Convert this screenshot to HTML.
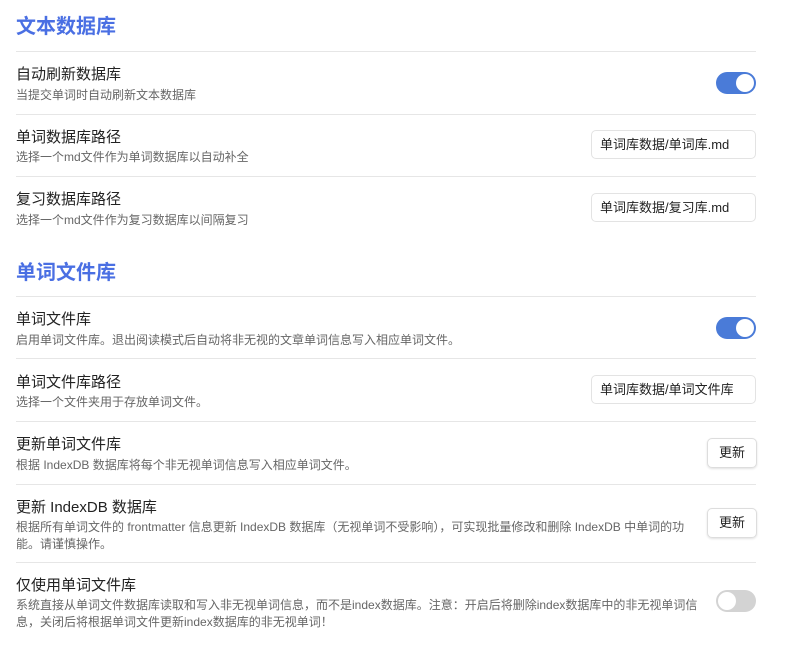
<!DOCTYPE html>
<html><head><meta charset="utf-8"><style>
body{margin:0;width:802px;height:650px;background:#fff;font-family:"Liberation Sans","Noto Sans CJK SC",sans-serif;position:relative;overflow:hidden}
.a{position:absolute}
h2{position:absolute;margin:0;left:16px;font-size:20px;font-weight:bold;color:#4a6fe3}
.hr{position:absolute;left:16px;width:740px;height:1px;background:#e6e6e6}
.n{position:absolute;left:16px;font-size:15px;color:#222}
.d{position:absolute;left:16px;font-size:12px;color:#666;line-height:17px;width:690px}
.t{position:absolute;left:716px;width:40px;height:22px;border-radius:11px;background:#4a7bd8}
.t::after{content:"";position:absolute;top:2px;right:2px;width:18px;height:18px;border-radius:50%;background:#fff}
.t.off{background:#d3d3d3}
.t.off::after{right:auto;left:2px}
.in{position:absolute;left:591px;width:163px;height:28px;border:1px solid #e3e3e3;border-radius:5px;font-size:13px;color:#222;line-height:28px;padding-left:8px;box-sizing:border-box;width:165px;height:29px}
.b{position:absolute;left:707px;width:48px;height:28px;border:1px solid #ddd;border-radius:5px;box-shadow:0 1px 2px rgba(0,0,0,.12);font-size:13px;color:#222;text-align:center;line-height:28px}
</style></head><body>
<h2 style="top:10px">文本数据库</h2>
<div class="hr" style="top:51px"></div>
<div class="n" style="top:63px">自动刷新数据库</div>
<div class="d" style="top:87px">当提交单词时自动刷新文本数据库</div>
<div class="t" style="top:72px"></div>
<div class="hr" style="top:114px"></div>
<div class="n" style="top:126px">单词数据库路径</div>
<div class="d" style="top:149px">选择一个md文件作为单词数据库以自动补全</div>
<div class="in" style="top:130px">单词库数据/单词库.md</div>
<div class="hr" style="top:176px"></div>
<div class="n" style="top:188px">复习数据库路径</div>
<div class="d" style="top:212px">选择一个md文件作为复习数据库以间隔复习</div>
<div class="in" style="top:193px">单词库数据/复习库.md</div>
<h2 style="top:256px">单词文件库</h2>
<div class="hr" style="top:296px"></div>
<div class="n" style="top:308px">单词文件库</div>
<div class="d" style="top:332px">启用单词文件库。退出阅读模式后自动将非无视的文章单词信息写入相应单词文件。</div>
<div class="t" style="top:317px"></div>
<div class="hr" style="top:358px"></div>
<div class="n" style="top:371px">单词文件库路径</div>
<div class="d" style="top:394px">选择一个文件夹用于存放单词文件。</div>
<div class="in" style="top:375px">单词库数据/单词文件库</div>
<div class="hr" style="top:421px"></div>
<div class="n" style="top:433px">更新单词文件库</div>
<div class="d" style="top:457px">根据 IndexDB 数据库将每个非无视单词信息写入相应单词文件。</div>
<div class="b" style="top:438px">更新</div>
<div class="hr" style="top:484px"></div>
<div class="n" style="top:496px">更新 IndexDB 数据库</div>
<div class="d" style="top:519px">根据所有单词文件的 frontmatter 信息更新 IndexDB 数据库（无视单词不受影响），可实现批量修改和删除 IndexDB 中单词的功能。请谨慎操作。</div>
<div class="b" style="top:508px">更新</div>
<div class="hr" style="top:562px"></div>
<div class="n" style="top:574px">仅使用单词文件库</div>
<div class="d" style="top:597px">系统直接从单词文件数据库读取和写入非无视单词信息，而不是index数据库。注意：开启后将删除index数据库中的非无视单词信息，关闭后将根据单词文件更新index数据库的非无视单词！</div>
<div class="t off" style="top:590px"></div>
</body></html>
